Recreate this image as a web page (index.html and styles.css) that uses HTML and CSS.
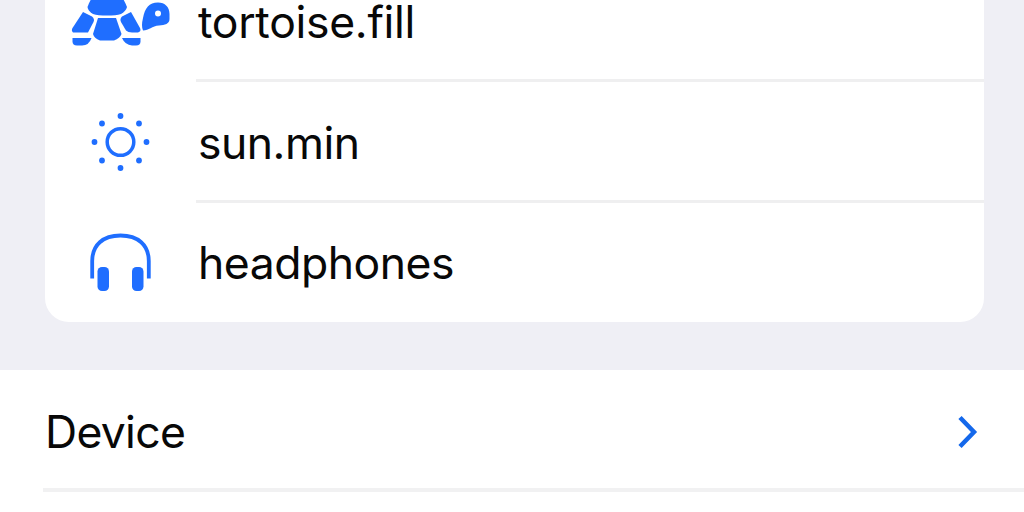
FILE: index.html
```html
<!DOCTYPE html>
<html lang="en">
<head>
<meta charset="utf-8">
<title>Symbols</title>
<link rel="stylesheet" href="styles.css">
</head>
<body>
<main class="screen">
  <section class="group">
    <ul class="card">
      <li class="row">
        <svg class="icon" viewBox="0 0 106 80" fill="currentColor">
          <path d="M20.500 25C25 12 32 8 40 8C49 8 55 12 60 25Q59 29 54 32Q49 33.500 40 33.500Q31 33.500 26 32Q21 29 20.500 25Z"/>
          <path d="M16 30L25 34.500Q28 37 26.500 40L21 50.500H6Q4 48.500 5.500 46Z"/>
          <path d="M64 30L55 34.500Q52.500 37 54 40L59 48.500Q61 50.500 65 50.500H71Q74.500 49.500 73 46Z"/>
          <path d="M31 36H49L54.500 52Q53 56 47 58.500H33Q27 56 26 52Z"/>
          <path d="M5.500 56H24.500Q22 63.500 15 63.500H10Q5.500 63.500 5.500 59.500Z"/>
          <path d="M55 56H73.500V59.500Q73.500 63.500 69 63.500H65Q58 63 55 56Z"/>
          <path fill-rule="evenodd" d="M76 48.500Q74 44 76 36C78 26 82 20.500 91 20.500C98 20.500 102.500 25 102.500 32V37C102.500 42 98 43 92 43.500C85 44 82 48.500 76 48.500ZM91 28.500A3 3 0 1 0 91 34.500A3 3 0 0 0 91 28.500Z"/>
        </svg>
        <span class="label tortoise">tortoise.fill</span>
      </li>
      <li class="row">
        <svg class="icon" viewBox="0 0 106 80" fill="currentColor">
          <circle cx="53.500" cy="39" r="13.300" fill="none" stroke="currentColor" stroke-width="3.500"/>
          <circle cx="53.500" cy="13" r="2.900"/>
          <circle cx="72" cy="20.500" r="2.900"/>
          <circle cx="79.500" cy="39" r="2.900"/>
          <circle cx="72" cy="57.500" r="2.900"/>
          <circle cx="53.500" cy="65" r="2.900"/>
          <circle cx="35" cy="57.500" r="2.900"/>
          <circle cx="27.500" cy="39" r="2.900"/>
          <circle cx="35" cy="20.500" r="2.900"/>
        </svg>
        <span class="label sun">sun.min</span>
      </li>
      <li class="row">
        <svg class="icon" viewBox="0 0 106 80" fill="currentColor">
          <path d="M25.200 55.500V38C25.200 22 36 12.500 53.500 12.500S81.800 22 81.800 38V55.500" fill="none" stroke="currentColor" stroke-width="3.800"/>
          <rect x="30.500" y="44" width="11.500" height="24" rx="4.500"/>
          <rect x="65" y="44" width="11.500" height="24" rx="4.500"/>
        </svg>
        <span class="label headphones">headphones</span>
      </li>
    </ul>
  </section>
  <section class="settings">
    <a class="setting">
      <span class="label device">Device</span>
      <svg class="chevron" viewBox="0 0 24 38"><path d="M4 4.500L18 19L4 33.500" fill="none" stroke="currentColor" stroke-width="4.500"/></svg>
    </a>
  </section>
</main>
</body>
</html>
```
FILE: styles.css
```css
* { box-sizing: border-box; }
body { margin: 0; background: #fff; color: #080808; font-family: Inter, "Liberation Sans", sans-serif; }
.screen { height: 512px; overflow: hidden; display: flex; flex-direction: column; }
.group { display: flex; align-items: flex-end; height: 370px; padding: 0 40px 48px 45px; background: #efeff5; flex: none; }
.card { width: 100%; margin: 0; padding: 0; list-style: none; background: #fff; border-radius: 24px; }
.row { display: flex; align-items: center; height: 121px; padding-left: 22px; }
.row:last-child { height: 119px; }
.icon { width: 106px; height: 80px; flex: none; color: #1f6eff; }
.label { font-size: 44.500px; line-height: 60px; letter-spacing: -0.500px; white-space: nowrap; }
.row .label { flex: 1; height: 121px; line-height: 123px; margin-left: 23px; padding-left: 2px; border-bottom: 3px solid #efeff0; }
.row .tortoise { letter-spacing: -0.300px; line-height: 122px; }
.row:last-child .label { border-bottom: 0; }
.settings { padding-left: 43px; }
.setting { display: flex; align-items: center; justify-content: space-between; height: 122px; padding: 5px 44px 0 2px; border-bottom: 4px solid #f1f1f2; }
.setting .label { letter-spacing: -0.700px; }
.chevron { width: 24px; height: 38px; color: #1468eb; }
```
